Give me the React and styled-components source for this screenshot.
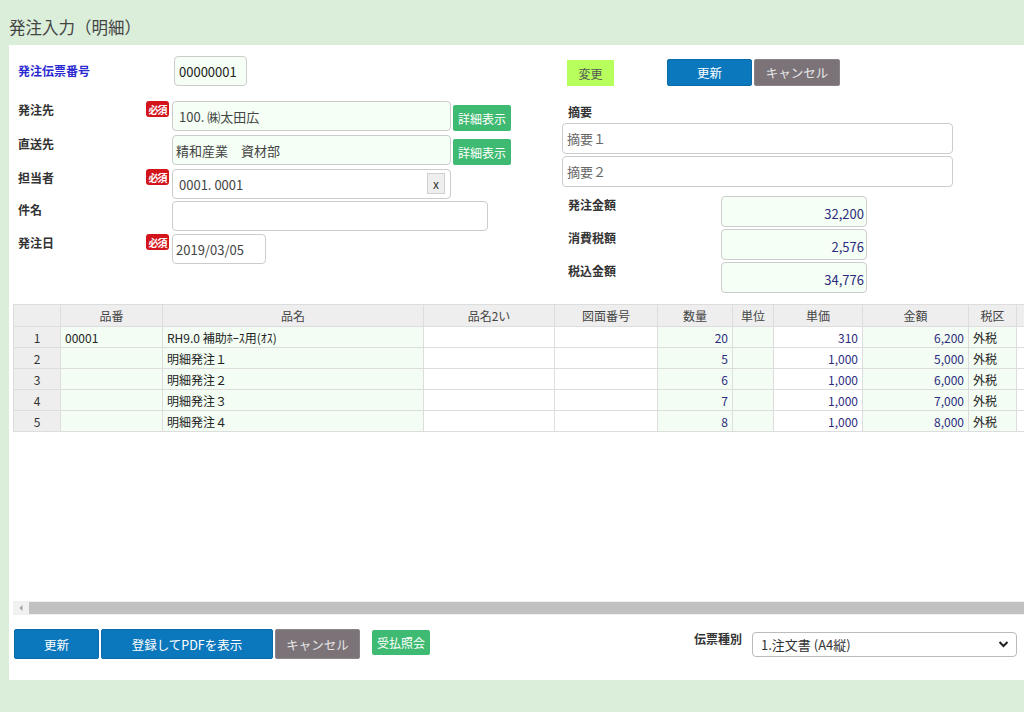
import React from "react";
import styled, { createGlobalStyle } from "styled-components";

const GlobalStyle = createGlobalStyle`
  html, body {
    margin: 0;
    padding: 0;
  }
  body {
    background: #daeeda;
    font-family: "Noto Sans CJK JP", "Noto Sans", sans-serif;
    color: #333;
    overflow: hidden;
  }
  input, select, button {
    font-family: inherit;
  }
`;

const columns = [
  { key: "no", label: "", w: 47 },
  { key: "code", label: "品番", w: 102, bg: "#f3fdf3" },
  { key: "name", label: "品名", w: 261, bg: "#f3fdf3" },
  { key: "name2", label: "品名2い", w: 131 },
  { key: "drawing", label: "図面番号", w: 103 },
  { key: "qty", label: "数量", w: 75, bg: "#f3fdf3", num: true },
  { key: "unit", label: "単位", w: 41, bg: "#f3fdf3" },
  { key: "price", label: "単価", w: 89, num: true },
  { key: "amount", label: "金額", w: 106, bg: "#f3fdf3", num: true },
  { key: "tax", label: "税区", w: 48, bg: "#f3fdf3" },
  { key: "extra", label: "", w: 80 },
];

const rows = [
  { no: 1, code: "00001", name: "RH9.0 補助ﾎｰｽ用(ｵｽ)", qty: "20", price: "310", amount: "6,200", tax: "外税" },
  { no: 2, code: "", name: "明細発注１", qty: "5", price: "1,000", amount: "5,000", tax: "外税" },
  { no: 3, code: "", name: "明細発注２", qty: "6", price: "1,000", amount: "6,000", tax: "外税" },
  { no: 4, code: "", name: "明細発注３", qty: "7", price: "1,000", amount: "7,000", tax: "外税" },
  { no: 5, code: "", name: "明細発注４", qty: "8", price: "1,000", amount: "8,000", tax: "外税" },
];

const totals = [
  { label: "発注金額", value: "32,200" },
  { label: "消費税額", value: "2,576" },
  { label: "税込金額", value: "34,776" },
];

const App = () => {
  return (
    <>
      <GlobalStyle />
      <Title>発注入力（明細）</Title>
      <Panel>
        <Top>
          <LeftCol>
            <FormRow $h={30} $mb={15}>
              <Label $w={156} $pt={6} $blue>
                発注伝票番号
              </Label>
              <Field $w={73} $bg="#f5fff5" $pl={4} $color="#222" readOnly value="00000001" />
            </FormRow>
            <FormRow $h={30} $mb={4}>
              <Label>発注先</Label>
              <BadgeSlot>
                <Badge>必須</Badge>
              </BadgeSlot>
              <Field $w={279} $bg="#f5fff5" readOnly value="100. ㈱太田広" />
              <DetailButton>詳細表示</DetailButton>
            </FormRow>
            <FormRow $h={30} $mb={4}>
              <Label>直送先</Label>
              <BadgeSlot />
              <Field $w={279} $bg="#f5fff5" $pl={3} readOnly value="精和産業　資材部" />
              <DetailButton>詳細表示</DetailButton>
            </FormRow>
            <FormRow $h={30} $mb={2}>
              <Label>担当者</Label>
              <BadgeSlot>
                <Badge>必須</Badge>
              </BadgeSlot>
              <ClearWrap>
                <Field $w={279} readOnly value="0001. 0001" />
                <ClearButton>x</ClearButton>
              </ClearWrap>
            </FormRow>
            <FormRow $h={30} $mb={3}>
              <Label>件名</Label>
              <BadgeSlot />
              <Field $w={316} readOnly value="" />
            </FormRow>
            <FormRow $h={30} $mb={0}>
              <Label>発注日</Label>
              <BadgeSlot>
                <Badge>必須</Badge>
              </BadgeSlot>
              <Field $w={94} $pl={3} readOnly value="2019/03/05" />
            </FormRow>
          </LeftCol>

          <RightCol>
            <ActionRow>
              <ChangeButton>変更</ChangeButton>
              <Button $w={85} $h={27}>更新</Button>
              <Button $w={86} $h={27} $gray $ml={2}>
                キャンセル
              </Button>
            </ActionRow>
            <SectionLabel>摘要</SectionLabel>
            <MemoList>
              <Field $w={391} $h={31} $pl={4} $color="#666" readOnly value="摘要１" />
              <Field $w={391} $h={31} $pl={4} $color="#666" readOnly value="摘要２" />
            </MemoList>
            <Totals>
              {totals.map((t) => (
                <AmountRow key={t.label}>
                  <AmountLabel>{t.label}</AmountLabel>
                  <AmountField readOnly value={t.value} />
                </AmountRow>
              ))}
            </Totals>
          </RightCol>
        </Top>

        <GridWrap>
          <Grid>
            <colgroup>
              {columns.map((c) => (
                <col key={c.key} style={{ width: c.w }} />
              ))}
            </colgroup>
            <thead>
              <tr>
                {columns.map((c) => (
                  <Th key={c.key}>{c.label}</Th>
                ))}
              </tr>
            </thead>
            <tbody>
              {rows.map((r) => (
                <tr key={r.no}>
                  {columns.map((c) =>
                    c.key === "no" ? (
                      <RowNo key={c.key}>{r.no}</RowNo>
                    ) : (
                      <Td key={c.key} $bg={c.bg} $num={c.num}>
                        {r[c.key] || ""}
                      </Td>
                    )
                  )}
                </tr>
              ))}
            </tbody>
          </Grid>
        </GridWrap>
        <ScrollTrack>
          <ScrollArrow>
            <svg width="6" height="8" viewBox="0 0 6 8">
              <path d="M4.5 1 L1.5 4 L4.5 7 Z" fill="#a3a3a3" />
            </svg>
          </ScrollArrow>
          <ScrollThumb />
        </ScrollTrack>

        <BottomBar>
          <Button $w={85} $h={30}>更新</Button>
          <Button $w={172} $h={30} $ml={2}>
            登録してPDFを表示
          </Button>
          <Button $w={85} $h={30} $ml={2} $gray>
            キャンセル
          </Button>
          <GreenButton>受払照会</GreenButton>
          <Spacer />
          <SlipLabel>伝票種別</SlipLabel>
          <SelectWrap>
            <Select defaultValue="1">
              <option value="1">1.注文書 (A4縦)</option>
              <option value="2">2.注文書 (A4横)</option>
            </Select>
            <Chevron width="11" height="8" viewBox="0 0 11 8">
              <path d="M1.5 2 L5.5 6 L9.5 2" fill="none" stroke="#222" strokeWidth="2" />
            </Chevron>
          </SelectWrap>
        </BottomBar>
      </Panel>
    </>
  );
};

export default App;

const Title = styled.h1`
  margin: 0;
  padding: 16px 0 0 9px;
  height: 29px;
  font-size: 16.5px;
  font-weight: 400;
  line-height: 22px;
  color: #444;
`;

const Panel = styled.div`
  margin-left: 9px;
  height: 635px;
  background: #fff;
  box-sizing: border-box;
`;

const Top = styled.div`
  display: flex;
  align-items: flex-start;
`;

const LeftCol = styled.div`
  width: 553px;
  flex-shrink: 0;
  padding: 11px 0 0 9px;
  box-sizing: border-box;
`;

const FormRow = styled.div`
  display: flex;
  align-items: flex-start;
  height: ${(p) => p.$h}px;
  margin-bottom: ${(p) => p.$mb}px;
`;

const Label = styled.div`
  width: ${(p) => p.$w || 128}px;
  flex-shrink: 0;
  padding-top: ${(p) => p.$pt || 0}px;
  font-size: 12px;
  font-weight: 700;
  line-height: 18px;
  color: ${(p) => (p.$blue ? "#2a2ad0" : "#333")};
`;

const BadgeSlot = styled.div`
  width: 26px;
  flex-shrink: 0;
`;

const Badge = styled.span`
  display: flex;
  align-items: center;
  justify-content: center;
  width: 23px;
  height: 16px;
  border-radius: 3px;
  background: #d3141b;
  color: #fff;
  font-size: 10px;
  font-weight: 700;
  letter-spacing: -1px;
`;

const Field = styled.input`
  width: ${(p) => p.$w}px;
  height: ${(p) => p.$h || 30}px;
  box-sizing: border-box;
  margin: 0;
  padding: 0 4px 0 ${(p) => p.$pl ?? 6}px;
  border: 1px solid #ccc;
  border-radius: 4px;
  background: ${(p) => p.$bg || "#fff"};
  color: ${(p) => p.$color || "#444"};
  font-size: 13px;
  outline: none;
`;

const DetailButton = styled.button`
  align-self: flex-end;
  width: 58px;
  height: 26px;
  margin-left: 2px;
  padding: 0;
  border: none;
  border-radius: 2px;
  background: #3fba72;
  color: #fff;
  font-size: 12px;
`;

const ClearWrap = styled.div`
  position: relative;
`;

const ClearButton = styled.button`
  position: absolute;
  top: 4px;
  right: 6px;
  width: 18px;
  height: 21px;
  padding: 0;
  border: 1px solid #d0d0d0;
  background: #eee;
  color: #333;
  font-size: 12px;
  line-height: 1;
`;

const RightCol = styled.div`
  flex: 1;
  padding-top: 14px;
`;

const ActionRow = styled.div`
  display: flex;
  align-items: flex-start;
  padding-left: 5px;
`;

const ChangeButton = styled.button`
  width: 47px;
  height: 26px;
  margin: 1px 53px 0 0;
  padding: 0;
  border: none;
  background: #b6ff5c;
  color: #555;
  font-size: 12px;
`;

const Button = styled.button`
  width: ${(p) => p.$w}px;
  height: ${(p) => p.$h}px;
  margin: 0 0 0 ${(p) => p.$ml || 0}px;
  padding: 0;
  border: 1px solid ${(p) => (p.$gray ? "#8a8388" : "#0a6aa6")};
  border-radius: 2px;
  background: ${(p) => (p.$gray ? "#7b7378" : "#0b78bd")};
  color: ${(p) => (p.$gray ? "#e8e8e8" : "#fff")};
  font-size: 12.5px;
  box-sizing: border-box;
`;

const SectionLabel = styled.div`
  margin: 17px 0 2px 6px;
  font-size: 12px;
  font-weight: 700;
  line-height: 18px;
  color: #333;
`;

const MemoList = styled.div`
  display: flex;
  flex-direction: column;
  gap: 2px;
`;

const Totals = styled.div`
  display: flex;
  flex-direction: column;
  gap: 2px;
  margin-top: 9px;
`;

const AmountRow = styled.div`
  display: flex;
  align-items: flex-start;
  height: 31px;
`;

const AmountLabel = styled.div`
  width: 153px;
  padding-left: 6px;
  font-size: 12px;
  font-weight: 700;
  line-height: 18px;
  color: #333;
`;

const AmountField = styled.input`
  width: 146px;
  height: 31px;
  box-sizing: border-box;
  margin: 0;
  padding: 4px 2px 0 4px;
  border: 1px solid #ccc;
  border-radius: 4px;
  background: #f5fff5;
  color: #2b2b7e;
  font-size: 13px;
  text-align: right;
  outline: none;
`;

const GridWrap = styled.div`
  margin: 11px 0 0 4px;
  height: 297px;
  overflow: hidden;
`;

const Grid = styled.table`
  border-collapse: collapse;
  table-layout: fixed;
  width: 1083px;
`;

const Th = styled.th`
  height: 21px;
  padding: 0 4px;
  border: 1px solid #ddd;
  background: #eee;
  color: #444;
  font-size: 12px;
  font-weight: 400;
  text-align: center;
`;

const Td = styled.td`
  height: 20px;
  padding: 0 4px;
  border: 1px solid #ddd;
  background: ${(p) => p.$bg || "#fff"};
  color: ${(p) => (p.$num ? "#2b2b7e" : "#222")};
  font-size: 12px;
  text-align: ${(p) => (p.$num ? "right" : "left")};
  white-space: nowrap;
  overflow: hidden;
`;

const RowNo = styled.td`
  height: 20px;
  padding: 0;
  border: 1px solid #ddd;
  background: #eee;
  color: #333;
  font-size: 12px;
  text-align: center;
`;

const ScrollTrack = styled.div`
  display: flex;
  align-items: center;
  height: 14px;
  margin-left: 4px;
  background: #f1f1f1;
`;

const ScrollArrow = styled.div`
  display: flex;
  align-items: center;
  justify-content: center;
  width: 16px;
  height: 14px;
`;

const ScrollThumb = styled.div`
  flex: 1;
  height: 12px;
  background: #c1c1c1;
`;

const BottomBar = styled.div`
  display: flex;
  align-items: flex-start;
  margin-top: 14px;
  padding: 0 7px 0 5px;
`;

const GreenButton = styled.button`
  width: 58px;
  height: 25px;
  margin: 1px 0 0 12px;
  padding: 0;
  border: none;
  border-radius: 2px;
  background: #3fba72;
  color: #fff;
  font-size: 12px;
`;

const Spacer = styled.div`
  flex: 1;
`;

const SlipLabel = styled.div`
  margin: 1px 10px 0 0;
  font-size: 12px;
  font-weight: 700;
  line-height: 18px;
  color: #333;
`;

const SelectWrap = styled.div`
  position: relative;
  margin-top: 2px;
`;

const Select = styled.select`
  appearance: none;
  width: 265px;
  height: 25px;
  margin: 0;
  padding: 0 24px 0 8px;
  border: 1px solid #bbb;
  border-radius: 4px;
  background: #fff;
  color: #333;
  font-size: 13px;
  outline: none;
`;

const Chevron = styled.svg`
  position: absolute;
  right: 8px;
  top: 9px;
  pointer-events: none;
`;
